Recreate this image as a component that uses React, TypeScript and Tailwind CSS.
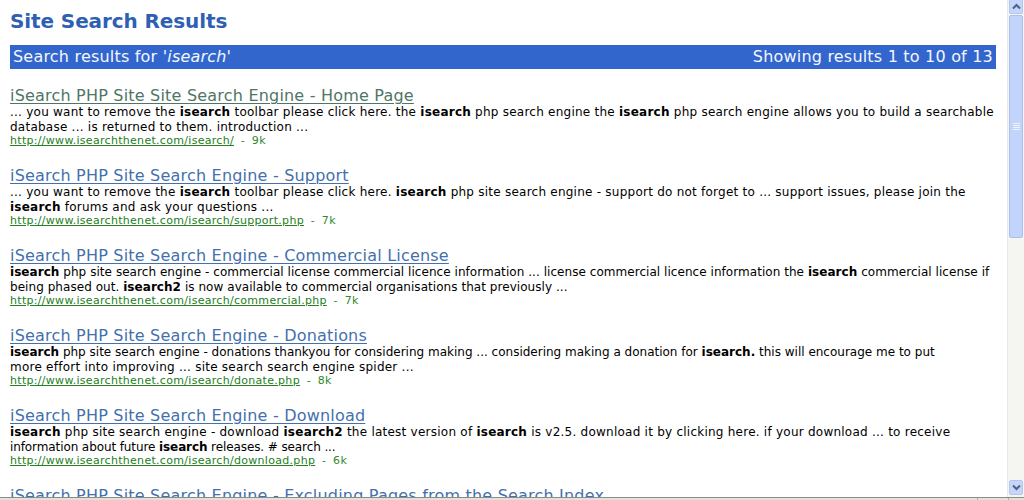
import React from "react";

type Piece = string | { b: string };
type Line = { t: string; p: Piece[] };
type Result = {
  title: string;
  lines: Line[];
  url: string;
  size: string;
  visited?: boolean;
};

const D = "tracking-[0.24px]";

const results: Result[] = [
  {
    title: "iSearch PHP Site Site Search Engine - Home Page",
    visited: true,
    lines: [
      { t: D, p: ["... you want to remove the ", { b: "isearch" }, " toolbar please click here. the ", { b: "isearch" }, " php search engine the ", { b: "isearch" }, " php search engine allows you to build a searchable"] },
      { t: D, p: ["database ... is returned to them. introduction ..."] },
    ],
    url: "http://www.isearchthenet.com/isearch/",
    size: "9k",
  },
  {
    title: "iSearch PHP Site Search Engine - Support",
    lines: [
      { t: D, p: ["... you want to remove the ", { b: "isearch" }, " toolbar please click here. ", { b: "isearch" }, " php site search engine - support do not forget to ... support issues, please join the"] },
      { t: D, p: [{ b: "isearch" }, " forums and ask your questions ..."] },
    ],
    url: "http://www.isearchthenet.com/isearch/support.php",
    size: "7k",
  },
  {
    title: "iSearch PHP Site Search Engine - Commercial License",
    lines: [
      { t: "tracking-[0.05px]", p: [{ b: "isearch" }, " php site search engine - commercial license commercial licence information ... license commercial licence information the ", { b: "isearch" }, " commercial license if"] },
      { t: "tracking-[0.05px]", p: ["being phased out. ", { b: "isearch2" }, " is now available to commercial organisations that previously ..."] },
    ],
    url: "http://www.isearchthenet.com/isearch/commercial.php",
    size: "7k",
  },
  {
    title: "iSearch PHP Site Search Engine - Donations",
    lines: [
      { t: "tracking-[0px]", p: [{ b: "isearch" }, " php site search engine - donations thankyou for considering making ... considering making a donation for ", { b: "isearch." }, " this will encourage me to put"] },
      { t: D, p: ["more effort into improving ... site search search engine spider ..."] },
    ],
    url: "http://www.isearchthenet.com/isearch/donate.php",
    size: "8k",
  },
  {
    title: "iSearch PHP Site Search Engine - Download",
    lines: [
      { t: D, p: [{ b: "isearch" }, " php site search engine - download ", { b: "isearch2" }, " the latest version of ", { b: "isearch" }, " is v2.5. download it by clicking here. if your download ... to receive"] },
      { t: "tracking-[-0.1px]", p: ["information about future ", { b: "isearch" }, " releases. # search ..."] },
    ],
    url: "http://www.isearchthenet.com/isearch/download.php",
    size: "6k",
  },
  {
    title: "iSearch PHP Site Search Engine - Excluding Pages from the Search Index",
    lines: [{ t: D, p: ["isearch php site search engine - excluding pages from the search index"] }],
    url: "http://www.isearchthenet.com/isearch/exclude.php",
    size: "5k",
  },
];

function Chevron({ up }: { up?: boolean }) {
  return (
    <svg width="9" height="7" viewBox="0 0 9 7">
      <path
        d={up ? "M1 5.5 L4.5 2 L8 5.5" : "M1 1.5 L4.5 5 L8 1.5"}
        fill="none"
        stroke="#4d6185"
        strokeWidth="2"
      />
    </svg>
  );
}

export default function App() {
  return (
    <div
      className="w-[1024px] h-[500px] overflow-hidden flex flex-col bg-white"
      style={{ fontFamily: '"DejaVu Sans", Verdana, sans-serif' }}
    >
      <div className="flex h-[497px]">
        <div className="w-[1007px] h-full overflow-hidden pl-[10px] pr-[11px]">
          <h1 className="mt-[10px] text-[20px] leading-[23px] font-bold text-[#2f5fb3] tracking-[-0.1px]">
            Site Search Results
          </h1>
          <div className="mt-[12px] h-[24px] bg-[#3366cc] flex items-center justify-between px-[3px] text-[#f4f7ff] text-[16px] leading-[24px] tracking-[0.2px]">
            <span>
              Search results for '<i>isearch</i>'
            </span>
            <span>Showing results 1 to 10 of 13</span>
          </div>
          <div className="mt-[17px]">
            {results.map((r, i) => (
              <div key={i} className="mb-[19px]">
                <a
                  href="#"
                  className={`block w-fit text-[16px] leading-[19px] tracking-[0.2px] underline underline-offset-[2px] decoration-1 ${
                    r.visited ? "text-[#4f7565]" : "text-[#4470ad]"
                  }`}
                >
                  {r.title}
                </a>
                <div className="text-[12px] leading-[15px] text-black whitespace-nowrap">
                  {r.lines.map((line, j) => (
                    <div key={j} className={line.t}>
                      {line.p.map((p, k) =>
                        typeof p === "string" ? (
                          <span key={k}>{p}</span>
                        ) : (
                          <b key={k}>{p.b}</b>
                        )
                      )}
                    </div>
                  ))}
                </div>
                <div className="text-[11px] leading-[12px] tracking-[0.3px] text-[#2f8a2f]">
                  <a href="#" className="underline text-[#238023]">
                    {r.url}
                  </a>
                  <span className="[word-spacing:3px]"> - {r.size}</span>
                </div>
              </div>
            ))}
          </div>
        </div>
        <div className="w-[17px] h-full flex flex-col bg-[#f5f5f1] border-l border-[#ece9e0]">
          <div className="h-[14px] mx-[1px] flex items-end justify-center bg-[#c6d6fb] border border-t-0 border-[#b3c6f2] rounded-b-[2px] pb-[3px]">
            <Chevron up />
          </div>
          <div className="h-[223px] mx-[1px] mt-[1px] bg-[#c3d4fc] border border-[#aac0f0] rounded-[2px] flex items-center justify-center">
            <div className="flex flex-col gap-[1px]">
              <div className="w-[7px] h-[1px] bg-[#eef3fe]" />
              <div className="w-[7px] h-[1px] bg-[#eef3fe]" />
              <div className="w-[7px] h-[1px] bg-[#eef3fe]" />
              <div className="w-[7px] h-[1px] bg-[#eef3fe]" />
            </div>
          </div>
          <div className="flex-1" />
          <div className="h-[15px] mx-[1px] mb-[2px] flex items-center justify-center bg-[#c6d6fb] border border-[#b3c6f2] rounded-[2px]">
            <Chevron />
          </div>
        </div>
      </div>
      <div className="h-[3px] border-t border-[#8c8c8c] bg-[#e4e1d6] flex">
        <div className="w-[977px]" />
        <div className="w-[31px] border-l border-[#b0ada2]" />
        <div className="flex-1 border-l border-[#b0ada2]" />
      </div>
    </div>
  );
}
